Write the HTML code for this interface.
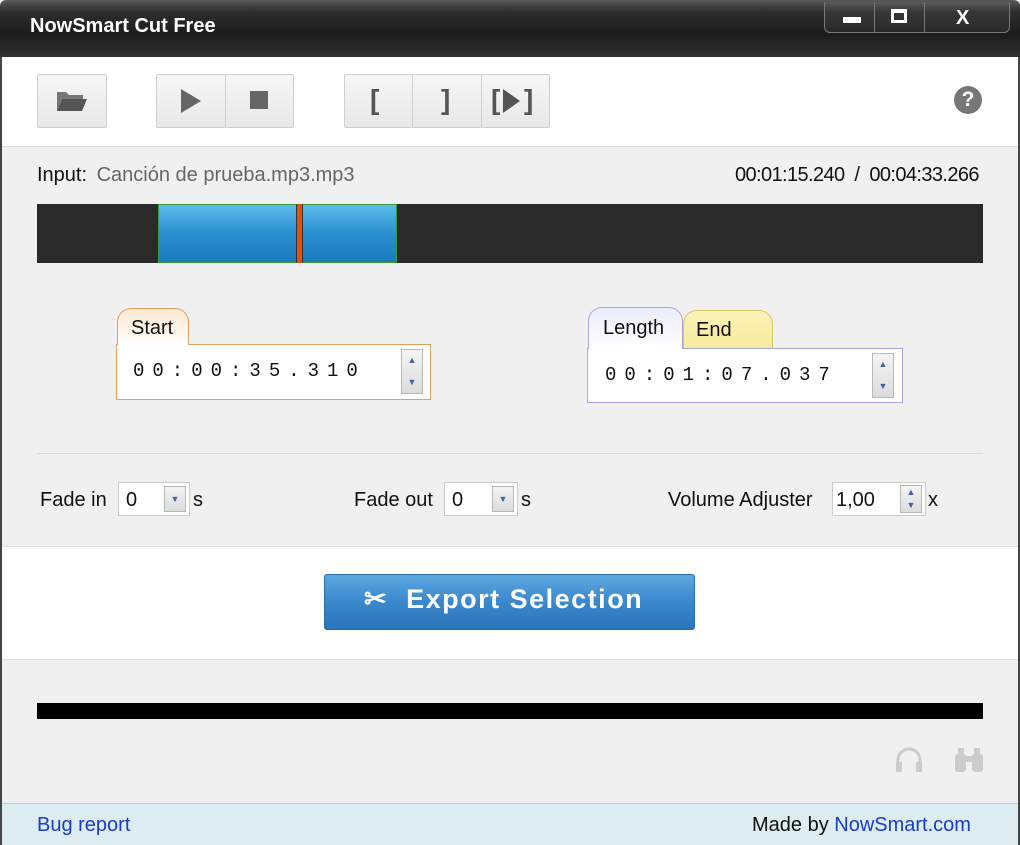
<!DOCTYPE html>
<html><head><meta charset="utf-8"><style>
*{margin:0;padding:0;box-sizing:border-box}
body{width:1020px;height:845px;overflow:hidden;font-family:"Liberation Sans",sans-serif;background:#f0f0f0;position:relative;color:#111}
.a{position:absolute}
.title{left:0;top:0;width:1020px;height:57px;background:linear-gradient(180deg,#5a5a5a 0,#2e2e2e 20%,#1c1c1c 60%,#303030 100%);border-radius:6px 6px 0 0}
.tb{border:1px solid #d0d0d0;background:linear-gradient(#f6f6f6,#e8e8e8);border-radius:2px}
.spin{width:22px;border:1px solid #b8b8b8;background:linear-gradient(#f4f4f4,#dcdcdc);font-size:9px;color:#4060b0;text-align:center;display:flex;flex-direction:column;justify-content:space-around;line-height:9px}
.mono{font-family:"Liberation Mono",monospace;font-size:19px;letter-spacing:8px}
.lbl{font-size:20px}
.inp{background:#fff;border:1px solid #ccc}
</style></head><body>
<div class="a title"></div>
<div class="a" style="left:30px;top:15px;color:#fff;font-size:20px;font-weight:bold">NowSmart Cut Free</div>
<div class="a" style="left:824px;top:2px;width:186px;height:31px;border:1px solid #777;border-top:none;border-radius:0 0 6px 6px;background:rgba(255,255,255,.05)"></div>
<div class="a" style="left:874px;top:2px;width:1px;height:31px;background:#777"></div>
<div class="a" style="left:924px;top:2px;width:1px;height:31px;background:#777"></div>
<div class="a" style="left:843px;top:17px;width:18px;height:6px;background:#fff"></div>
<div class="a" style="left:891px;top:9px;width:16px;height:14px;border:3px solid #fff;border-top-width:4px"></div>
<div class="a" style="left:956px;top:7px;color:#fff;font-size:20px;font-weight:bold">X</div>
<div class="a" style="left:2px;top:57px;width:1016px;height:89px;background:#fff"></div>
<div class="a" style="left:0;top:57px;width:2px;height:788px;background:#444"></div>
<div class="a" style="left:1018px;top:57px;width:2px;height:788px;background:#444"></div>
<div class="a tb" style="left:37px;top:74px;width:70px;height:54px"></div>
<svg class="a" style="left:56px;top:89px" width="32" height="24"><path d="M1 3h9l3 3h14v4H6L1 22z" fill="#777"/><path d="M6 10h25l-5 12H1z" fill="#555"/></svg>
<div class="a tb" style="left:156px;top:74px;width:70px;height:54px"></div>
<div class="a tb" style="left:225px;top:74px;width:69px;height:54px"></div>
<svg class="a" style="left:181px;top:89px" width="22" height="24"><path d="M0 0L20 12L0 24z" fill="#666"/></svg>
<div class="a" style="left:250px;top:91px;width:18px;height:18px;background:#666"></div>
<div class="a tb" style="left:344px;top:74px;width:69px;height:54px"></div>
<div class="a tb" style="left:412px;top:74px;width:70px;height:54px"></div>
<div class="a tb" style="left:481px;top:74px;width:69px;height:54px"></div>
<div class="a" style="left:370px;top:84px;font-size:28px;font-weight:bold;color:#555">[</div>
<div class="a" style="left:441px;top:84px;font-size:28px;font-weight:bold;color:#555">]</div>
<div class="a" style="left:491px;top:84px;font-size:28px;font-weight:bold;color:#555">[</div>
<svg class="a" style="left:503px;top:89px" width="18" height="24"><path d="M0 0L17 12L0 24z" fill="#555"/></svg>
<div class="a" style="left:524px;top:84px;font-size:28px;font-weight:bold;color:#555">]</div>
<div class="a" style="left:954px;top:86px;width:28px;height:28px;border-radius:50%;background:#777;color:#fff;font-weight:bold;font-size:21px;text-align:center;line-height:28px">?</div>
<div class="a" style="left:2px;top:146px;width:1016px;height:1px;background:#ddd"></div>
<div class="a lbl" style="left:37px;top:164px">Input: <span style="color:#666;margin-left:4px">Canción de prueba.mp3.mp3</span></div>
<div class="a lbl" style="left:735px;top:164px;letter-spacing:-0.6px">00:01:15.240 &nbsp;/ &nbsp;00:04:33.266</div>
<div class="a" style="left:37px;top:204px;width:946px;height:59px;background:#2a2a2a"></div>
<div class="a" style="left:158px;top:204px;width:239px;height:59px;border:1px solid #3a9a3a;background:linear-gradient(#5cbcea,#2a8fd0 50%,#1a78be)"></div>
<div class="a" style="left:296px;top:204px;width:7px;height:59px;background:#e05010;border-left:1px solid #333;border-right:1px solid #333"></div>
<div class="a" style="left:117px;top:308px;width:72px;height:40px;border:1px solid #e0a060;border-bottom:none;border-radius:14px 14px 0 0;background:linear-gradient(#fde8d0,#fff)"></div>
<div class="a" style="left:116px;top:344px;width:315px;height:56px;border:1px solid #e0a060;background:#fff"></div>
<div class="a" style="left:118px;top:340px;width:70px;height:6px;background:#fff"></div>
<div class="a lbl" style="left:131px;top:317px">Start</div>
<div class="a mono" style="left:133px;top:360px">00:00:35.310</div>
<div class="a spin" style="left:401px;top:349px;height:45px"><span>▲</span><span>▼</span></div>
<div class="a" style="left:683px;top:310px;width:90px;height:40px;border:1px solid #d8c860;border-bottom:none;border-radius:14px 14px 0 0;background:linear-gradient(#fbf3b8,#f6ea9c)"></div>
<div class="a" style="left:588px;top:307px;width:95px;height:43px;border:1px solid #a8a8e0;border-bottom:none;border-radius:14px 14px 0 0;background:linear-gradient(#ececfc,#fff)"></div>
<div class="a" style="left:587px;top:348px;width:316px;height:55px;border:1px solid #a8a8e0;background:#fff"></div>
<div class="a" style="left:589px;top:344px;width:93px;height:6px;background:#fff"></div>
<div class="a lbl" style="left:603px;top:317px">Length</div>
<div class="a lbl" style="left:696px;top:319px">End</div>
<div class="a mono" style="left:605px;top:364px">00:01:07.037</div>
<div class="a spin" style="left:872px;top:353px;height:45px"><span>▲</span><span>▼</span></div>
<div class="a" style="left:37px;top:453px;width:946px;height:1px;background:#d8d8d8"></div>
<div class="a lbl" style="left:40px;top:489px">Fade in</div>
<div class="a inp" style="left:118px;top:482px;width:72px;height:34px"></div>
<div class="a lbl" style="left:126px;top:489px">0</div>
<div class="a spin" style="left:164px;top:486px;height:26px"><span>▼</span></div>
<div class="a lbl" style="left:193px;top:489px">s</div>
<div class="a lbl" style="left:354px;top:489px">Fade out</div>
<div class="a inp" style="left:444px;top:482px;width:74px;height:34px"></div>
<div class="a lbl" style="left:452px;top:489px">0</div>
<div class="a spin" style="left:492px;top:486px;height:26px"><span>▼</span></div>
<div class="a lbl" style="left:521px;top:489px">s</div>
<div class="a lbl" style="left:668px;top:489px">Volume Adjuster</div>
<div class="a inp" style="left:832px;top:482px;width:94px;height:34px"></div>
<div class="a lbl" style="left:836px;top:489px">1,00</div>
<div class="a spin" style="left:900px;top:485px;height:28px"><span>▲</span><span>▼</span></div>
<div class="a lbl" style="left:928px;top:489px">x</div>
<div class="a" style="left:2px;top:546px;width:1016px;height:114px;background:#fff;border-top:1px solid #e0e0e0;border-bottom:1px solid #e0e0e0"></div>
<div class="a" style="left:324px;top:574px;width:371px;height:56px;border:1px solid #2a6fa8;border-radius:3px;background:linear-gradient(#5ea8e0,#3a88cc 50%,#2a74b8)"></div>
<div class="a" style="left:364px;top:584px;color:#fff;font-size:27px;font-weight:bold;letter-spacing:1.5px">✂ &nbsp;Export Selection</div>
<div class="a" style="left:37px;top:703px;width:946px;height:16px;background:#000"></div>
<svg class="a" style="left:894px;top:746px" width="30" height="28"><path d="M4 22V14a11 11 0 0 1 22 0v8" fill="none" stroke="#ccc" stroke-width="3"/><rect x="2" y="16" width="6" height="10" fill="#ccc"/><rect x="22" y="16" width="6" height="10" fill="#ccc"/></svg>
<svg class="a" style="left:953px;top:746px" width="32" height="28"><rect x="2" y="8" width="11" height="18" rx="3" fill="#ccc"/><rect x="19" y="8" width="11" height="18" rx="3" fill="#ccc"/><rect x="5" y="2" width="6" height="8" fill="#ccc"/><rect x="21" y="2" width="6" height="8" fill="#ccc"/><rect x="12" y="10" width="8" height="6" fill="#ccc"/></svg>
<div class="a" style="left:2px;top:803px;width:1016px;height:42px;background:#dcecf0;border-top:1px solid #b8d0d8"></div>
<div class="a lbl" style="left:37px;top:814px;color:#1a3cc8">Bug report</div>
<div class="a lbl" style="left:752px;top:814px">Made by <span style="color:#1a3cc8">NowSmart.com</span></div>
</body></html>
